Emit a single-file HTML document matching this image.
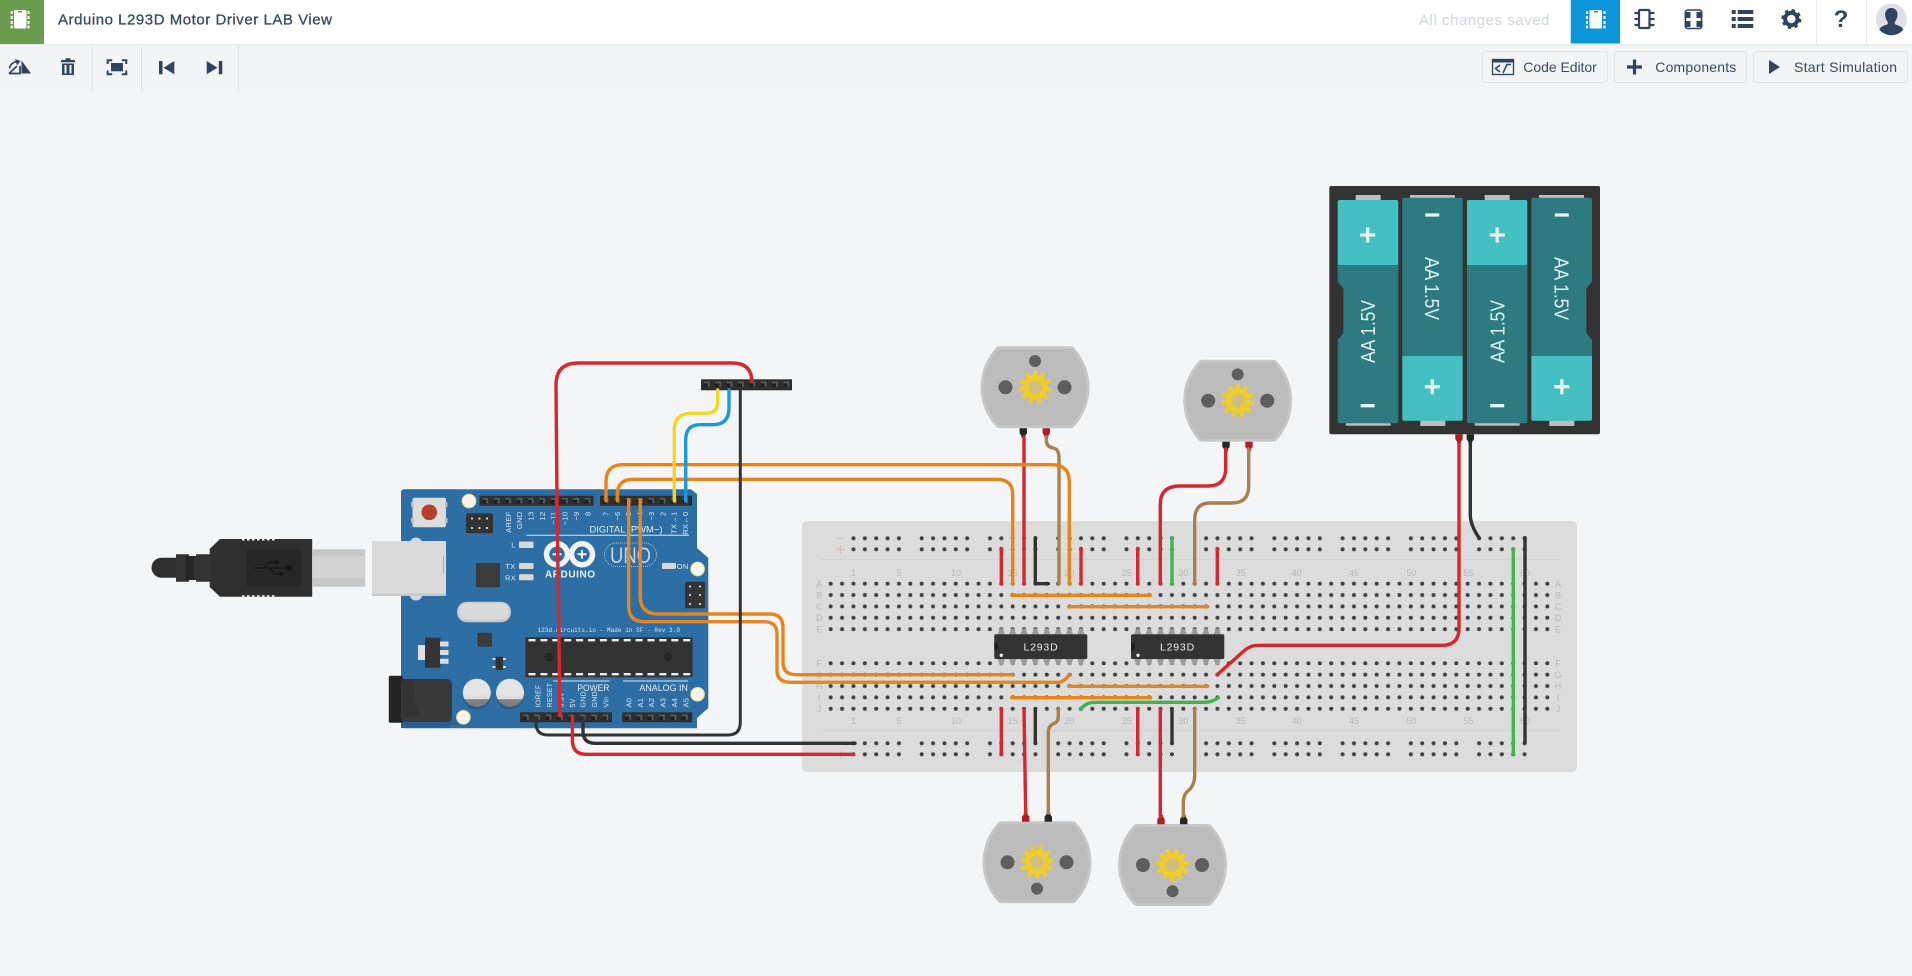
<!DOCTYPE html>
<html>
<head>
<meta charset="utf-8">
<title>Arduino L293D Motor Driver LAB View</title>
<style>
html,body{margin:0;padding:0;background:#f3f5f7;width:1912px;height:976px;overflow:hidden}
svg{display:block;position:absolute;left:0;top:0}
text{font-family:"Liberation Sans",sans-serif}
.w{fill:none;stroke-width:3.4;stroke-linecap:round;stroke-linejoin:round}
.r{stroke:#d9262c}.o{stroke:#e8841c}.b{stroke:#a8814f}.g{stroke:#3fb54a}.k{stroke:#333}.y{stroke:#f5d523}.u{stroke:#1b9ad6}
.lb{fill:#dfe8f0;font-size:7.5px;letter-spacing:.3px}
.bl{fill:#b9b9b9;font-size:9px;text-anchor:middle}
.t{fill:#3a4a5f;font-size:14px}
.ic{fill:#2f4460}
</style>
</head>
<body>
<svg width="1912" height="976" viewBox="0 0 1912 976" xmlns="http://www.w3.org/2000/svg">
<defs>
<pattern id="hole" patternUnits="userSpaceOnUse" width="11.375" height="11.37"><circle cx="5.69" cy="5.685" r="2" fill="#404040"/></pattern>
<pattern id="rail" patternUnits="userSpaceOnUse" width="68.25" height="11">
<g fill="#404040"><circle cx="5.69" cy="5.5" r="2"/><circle cx="17.06" cy="5.5" r="2"/><circle cx="28.44" cy="5.5" r="2"/><circle cx="39.81" cy="5.5" r="2"/><circle cx="51.19" cy="5.5" r="2"/></g></pattern>
<pattern id="pin" patternUnits="userSpaceOnUse" width="11.37" height="10">
<rect width="11.37" height="10" fill="#2e2e2e"/><path d="M3 2.2h5.6v5.6h-1.8v-3.8h-3.8z" fill="#5c5c5c"/><rect x="3" y="4" width="3.8" height="3.8" fill="#1f1f1f"/></pattern>
<pattern id="ictop" patternUnits="userSpaceOnUse" width="11.37" height="7"><path d="M2 7 L4.2 1.5 Q5.7 0 7.2 1.5 L9.4 7z" fill="#9b9b9b"/></pattern>
<pattern id="icbot" patternUnits="userSpaceOnUse" width="11.37" height="7"><path d="M2 0 L4.2 5.5 Q5.7 7 7.2 5.5 L9.4 0z" fill="#9b9b9b"/></pattern>
<pattern id="dash" patternUnits="userSpaceOnUse" width="11.9" height="3"><rect x="2.5" width="7" height="2.4" fill="#eeeeee"/></pattern>
<g id="motor">
<path d="M-38 -40.5Q-36 -41 -34 -41H34Q36 -41 38 -40.5A58 58 0 0 1 38 40.5Q36 41 34 41H-34Q-36 41 -38 40.5A58 58 0 0 1 -38 -40.5Z" fill="#c7c7c7"/>
<path d="M-36 -38.5H36A55 55 0 0 1 36 38.5H-36A55 55 0 0 1 -36 -38.5Z" fill="#bcbcbc"/>
<circle cx="-29.5" cy="0" r="7" fill="#5e5e5e"/><circle cx="29.5" cy="0" r="7" fill="#5e5e5e"/>
<circle cx="0" cy="-26.3" r="6" fill="#5e5e5e"/>
<circle r="12.5" fill="#efcd2a"/>
<circle r="14" fill="none" stroke="#efcd2a" stroke-width="5" stroke-dasharray="4 3.99"/>
<circle r="6.8" fill="#cfc07f"/>
</g>
<g id="tk"><path d="M-3.7 0h7.4v5l-1.8 2.5v2h-3.8v-2l-1.8-2.5z" fill="#262626"/></g>
<g id="tr"><path d="M-3.7 0h7.4v5l-1.8 2.5v2h-3.800v-2l-1.8-2.5z" fill="#b01f24"/></g>
<g id="cap"><circle cy="3" r="14" fill="#245d8e"/><circle r="14" fill="#e4e4e4"/><path d="M-12.5 6.5 A14 14 0 0 0 12.5 6.5 Z" fill="#4a4a4a"/><path d="M-14 0A14 14 0 0 0 14 0A14 3 0 0 1 -14 0Z" fill="#d0d0d0" opacity=".4"/></g>
</defs>

<!-- canvas -->
<rect width="1912" height="976" fill="#f3f5f7"/>
<!-- toolbar -->
<rect x="0" y="44" width="1912" height="47" fill="#f2f4f6"/>
<path d="M92.500 46V91M141.500 46V91M238.500 46V91" stroke="#e0e3e7" stroke-width="1"/>
<!-- top bar -->
<rect x="0" y="44" width="1912" height="1" fill="#e6e8eb"/>
<rect x="0" y="45" width="1912" height="1" fill="#eef0f2"/>
<rect width="1912" height="44" fill="#fff"/>
<rect width="44" height="44" fill="#6a9b4f"/>
<g fill="#fff"><rect x="14" y="10" width="12.500" height="18.500" rx="1.500"/><path d="M10.700 11h2v3h-2zM10.700 16h2v3h-2zM10.700 21h2v3h-2zM10.700 25.500h2v3h-2zM27.500 11h2v3h-2zM27.500 16h2v3h-2zM27.500 21h2v3h-2zM27.500 25.500h2v3h-2z"/></g>
<rect x="18" y="11" width="4" height="1.500" fill="#6a9b4f"/>
<text x="58" y="24.500" font-size="15" fill="#3a4a5f" textLength="274" lengthAdjust="spacing" stroke="#3a4a5f" stroke-width=".3">Arduino L293D Motor Driver LAB View</text>
<text x="1419" y="25" font-size="15" fill="#d2d7dc" textLength="130.500" lengthAdjust="spacing">All changes saved</text>
<rect x="1570.700" y="0" width="49.300" height="43.500" fill="#0a96d8"/>
<g fill="#fff"><rect x="1589.500" y="10" width="12.500" height="18.500" rx="1.500"/><path d="M1586 11h2v3h-2zM1586 16h2v3h-2zM1586 21h2v3h-2zM1586 25.500h2v3h-2zM1603.500 11h2v3h-2zM1603.500 16h2v3h-2zM1603.500 21h2v3h-2zM1603.500 25.500h2v3h-2z"/></g>
<rect x="1594" y="11" width="4" height="1.500" fill="#0a96d8"/>
<!-- chip icon -->
<g fill="none" stroke="#2f4460" stroke-width="2.200"><rect x="1639" y="10" width="10.500" height="18" rx="1"/><path d="M1634.500 13h4.500M1634.500 19h4.500M1634.500 25h4.500M1650 13h4.500M1650 19h4.500M1650 25h4.500"/></g>
<!-- breadboard icon -->
<g><rect x="1685.500" y="10" width="16" height="18.500" rx="2" fill="none" stroke="#2f4460" stroke-width="1.600"/><path d="M1684.500 12h6v6h-6zM1684.500 21h6v6h-6zM1696.500 12h6v6h-6zM1696.500 21h6v6h-6z" fill="#2f4460"/></g>
<!-- list -->
<g class="ic"><rect x="1731.700" y="10" width="4" height="4"/><rect x="1737.700" y="10" width="15.600" height="4"/><rect x="1731.700" y="17" width="4" height="4"/><rect x="1737.700" y="17" width="15.600" height="4"/><rect x="1731.700" y="24" width="4" height="4"/><rect x="1737.700" y="24" width="15.600" height="4"/></g>
<!-- gear -->
<g><circle cx="1791.300" cy="19" r="6.200" fill="none" stroke="#2f4460" stroke-width="4"/><circle cx="1791.300" cy="19" r="8.700" fill="none" stroke="#2f4460" stroke-width="2.600" stroke-dasharray="3.400 3.430"/></g>
<text x="1841" y="27" font-size="24" font-weight="bold" text-anchor="middle" fill="#2f4460">?</text>
<path d="M1816.500 0V44M1866.500 0V44" stroke="#e6e8eb"/>
<circle cx="1891.300" cy="19" r="15.500" fill="#dde1e6"/>
<path d="M1891.300 8c-4.200 0-6.600 3.200-6.200 7.300.3 3 1.500 5.300 2.700 6.700v2.200c-3 1.200-7.200 1.900-8.500 5.400a15.500 15.500 0 0 0 24 0c-1.300-3.500-5.500-4.200-8.500-5.400V22c1.200-1.400 2.400-3.700 2.700-6.700.4-4.100-2-7.300-6.200-7.300z" fill="#2f4460"/>

<!-- toolbar icons -->
<path d="M9 73.500H20V66" fill="none" stroke="#2f4460" stroke-width="1.800"/>
<path d="M9 73.500L17 66" fill="none" stroke="#2f4460" stroke-width="1.600"/>
<path d="M9.500 68.500c.5-3.500 3-6 7-7" fill="none" stroke="#2f4460" stroke-width="1.600"/>
<path d="M15 59l5.500 2-3.500 4.500z" fill="#2f4460"/>
<path d="M21.500 73.500V60.500L31 73.500z" fill="#2f4460"/>
<g fill="#2f4460"><path d="M65.500 58.300h5v1.700h4.500v2.200H61V60h4.500z"/><path fill-rule="evenodd" d="M62 63.500h12V75H62zM64.500 65v8.500h2V65zM69.500 65v8.500h2V65z"/></g>
<g fill="none" stroke="#2f4460" stroke-width="2"><path d="M107.700 64v-3.700h4.500M121.800 60.300h4.500V64M126.300 70.500v3.700h-4.500M112.200 74.200h-4.500v-3.700"/></g>
<rect x="111" y="63" width="12" height="8.300" fill="#2f4460"/>
<path d="M159 61h3.500v13.300H159zM174.300 61v13.300L163.500 67.700z" fill="#2f4460"/>
<path d="M222.300 61h-3.500v13.300h3.500zM206.700 61v13.300l10.800-6.600z" fill="#2f4460"/>

<!-- buttons -->
<g fill="#f2f4f6" stroke="#e2e5e9"><rect x="1482.500" y="51.500" width="125" height="31" rx="3"/><rect x="1614.500" y="51.500" width="132" height="31" rx="3"/><rect x="1753.500" y="51.500" width="154" height="31" rx="3"/></g>
<rect x="1492.500" y="59.500" width="21" height="15" fill="none" stroke="#2f4460" stroke-width="1.300"/>
<rect x="1492.500" y="59.500" width="21" height="3" fill="#2f4460"/>
<path d="M1500 65l-4.500 3.500 4.500 3.500M1503 73l4-8.500h4" fill="none" stroke="#2f4460" stroke-width="1.500"/>
<text class="t" x="1523.300" y="72" textLength="73.500" lengthAdjust="spacing">Code Editor</text>
<path d="M1627 67h15M1634.500 59.500v15" stroke="#2f4460" stroke-width="3.200"/>
<text class="t" x="1655.300" y="72" textLength="81" lengthAdjust="spacing">Components</text>
<path d="M1769 60v14l11-7z" fill="#2f4460"/>
<text class="t" x="1794" y="72" textLength="103" lengthAdjust="spacing">Start Simulation</text>

<!-- BREADBOARD -->
<rect x="802" y="521" width="775" height="251" rx="5" fill="#dcdcdc"/>
<path d="M820 559.300H1560M820 730.700H1560" stroke="#d2d2d2"/>
<rect width="728" height="56.850" transform="translate(825,578)" fill="url(#hole)"/>
<rect width="728" height="56.850" transform="translate(825,657.600)" fill="url(#hole)"/>
<rect width="341.250" height="22" transform="translate(847.760,532.800)" fill="url(#rail)"/>
<rect width="335.500" height="22" transform="translate(1200.400,532.800)" fill="url(#rail)"/>
<rect width="341.250" height="22" transform="translate(847.760,737.800)" fill="url(#rail)"/>
<rect width="335.500" height="22" transform="translate(1200.400,737.800)" fill="url(#rail)"/>
<path d="M836 538.300h9" stroke="#cfcfcf" stroke-width="1.200"/>
<path d="M836 549.300h9M840.500 545v9" stroke="#eab5b5" stroke-width="1.200"/>
<path d="M836 743.300h9" stroke="#d3d3d3" stroke-width="1"/>
<path d="M836 754.300h9M840.500 750v9" stroke="#e0c8c8" stroke-width="1"/>
<g class="bl">
<text x="853.400" y="576">1</text><text x="899" y="576">5</text><text x="956" y="576">10</text><text x="1012.700" y="576">15</text><text x="1069.400" y="576">20</text><text x="1126.700" y="576">25</text><text x="1183.400" y="576">30</text><text x="1240.700" y="576">35</text><text x="1296.700" y="576">40</text><text x="1354" y="576">45</text><text x="1411.500" y="576">50</text><text x="1468.300" y="576">55</text><text x="1525" y="576">60</text>
<text x="853.400" y="724">1</text><text x="899" y="724">5</text><text x="956" y="724">10</text><text x="1012.700" y="724">15</text><text x="1069.400" y="724">20</text><text x="1126.700" y="724">25</text><text x="1183.400" y="724">30</text><text x="1240.700" y="724">35</text><text x="1296.700" y="724">40</text><text x="1354" y="724">45</text><text x="1411.500" y="724">50</text><text x="1468.300" y="724">55</text><text x="1525" y="724">60</text>
<text x="819.300" y="587">A</text><text x="819.300" y="598.500">B</text><text x="819.300" y="610">C</text><text x="819.300" y="621">D</text><text x="819.300" y="632.500">E</text><text x="819.300" y="666.500">F</text><text x="819.300" y="678">G</text><text x="819.300" y="689">H</text><text x="819.300" y="701">I</text><text x="819.300" y="712">J</text>
<text x="1558" y="587">A</text><text x="1558" y="598.500">B</text><text x="1558" y="610">C</text><text x="1558" y="621">D</text><text x="1558" y="632.500">E</text><text x="1558" y="666.500">F</text><text x="1558" y="678">G</text><text x="1558" y="689">H</text><text x="1558" y="701">I</text><text x="1558" y="712">J</text>
</g>
<!-- L293D ICs -->
<rect width="91" height="7" transform="translate(995.600,627.400)" fill="url(#ictop)"/>
<rect width="91" height="7" transform="translate(995.600,659)" fill="url(#icbot)"/>
<rect x="994.300" y="634.300" width="93" height="24.700" rx="1.500" fill="#333"/>
<path d="M994.300 642.500a4 4 0 0 1 0 8z" fill="#1d1d1d"/>
<circle cx="1001.300" cy="655.300" r="1.700" fill="#eee"/>
<text x="1041" y="650.500" font-size="10.500" fill="#eee" text-anchor="middle" letter-spacing=".8">L293D</text>
<rect width="91" height="7" transform="translate(1132,627.400)" fill="url(#ictop)"/>
<rect width="91" height="7" transform="translate(1132,659)" fill="url(#icbot)"/>
<rect x="1131" y="634.300" width="93.300" height="24.700" rx="1.500" fill="#333"/>
<path d="M1131 642.500a4 4 0 0 1 0 8z" fill="#1d1d1d"/>
<circle cx="1138" cy="655.300" r="1.700" fill="#eee"/>
<text x="1177.500" y="650.500" font-size="10.500" fill="#eee" text-anchor="middle" letter-spacing=".8">L293D</text>

<!-- MOTORS -->
<use href="#motor" transform="translate(1035,387.300)"/>
<use href="#tk" x="1023.300" y="428.300"/><use href="#tr" x="1046.300" y="428.300"/>
<use href="#motor" transform="translate(1237.700,400.700)"/>
<use href="#tk" x="1226" y="441.700"/><use href="#tr" x="1249" y="441.700"/>
<use href="#motor" transform="translate(1037,862.300) scale(1,-1)"/>
<use href="#tr" transform="translate(1025.700,821.700) scale(1,-1)"/><use href="#tk" transform="translate(1048.300,821.700) scale(1,-1)"/>
<use href="#motor" transform="translate(1172.500,865) scale(1,-1)"/>
<use href="#tr" transform="translate(1161,824.300) scale(1,-1)"/><use href="#tk" transform="translate(1183.700,824.300) scale(1,-1)"/>

<!-- BATTERY -->
<rect x="1329.300" y="186" width="270.700" height="248.300" rx="2" fill="#333"/>
<g fill="#bdbdbd">
<rect x="1355.700" y="195" width="25" height="6"/><rect x="1345.700" y="422" width="45" height="3.700"/>
<rect x="1410" y="195" width="45" height="3.500"/><rect x="1420.300" y="420" width="25" height="6"/>
<rect x="1484.700" y="195" width="25" height="6"/><rect x="1474.700" y="422" width="45" height="3.700"/>
<rect x="1539" y="195" width="45" height="3.500"/><rect x="1549.300" y="420" width="25" height="6"/>
</g>
<g>
<path d="M1337.700 202a2 2 0 0 1 2-2h56.600a2 2 0 0 1 2 2v63h-60.600z" fill="#45c0c2"/>
<path d="M1337.700 265h60.600v156.300a2 2 0 0 1-2 2h-56.600a2 2 0 0 1-2-2V340l5.700-7V288.500l-5.700-6.800z" fill="#2d7b81"/>
<path d="M1404.300 197.700h56.400a2 2 0 0 1 2 2V356h-60.400V199.700a2 2 0 0 1 2-2z" fill="#2d7b81"/>
<path d="M1402.300 356h60.400v62.700a2 2 0 0 1-2 2h-56.400a2 2 0 0 1-2-2z" fill="#45c0c2"/>
<path d="M1467 202a2 2 0 0 1 2-2h56.300a2 2 0 0 1 2 2v63H1467z" fill="#45c0c2"/>
<path d="M1467 265h60.300v156.300a2 2 0 0 1-2 2H1469a2 2 0 0 1-2-2z" fill="#2d7b81"/>
<path d="M1533.300 197.700H1590a2 2 0 0 1 2 2V281.700l-5.700 6.800V333l5.700 7V356h-60.700V199.700a2 2 0 0 1 2-2z" fill="#2d7b81"/>
<path d="M1531.300 356H1592v62.700a2 2 0 0 1-2 2h-56.700a2 2 0 0 1-2-2z" fill="#45c0c2"/>
</g>
<g stroke="#e8f4f4" stroke-width="3.300" fill="none">
<path d="M1360.200 235h15M1367.700 227.500v15M1360.700 405.700h14"/>
<path d="M1425.300 215h14M1424.800 386.700h15M1432.300 379.200v15"/>
<path d="M1489.700 235h15M1497.200 227.500v15M1490.200 405.700h14"/>
<path d="M1554.800 215h14M1554.300 386.700h15M1561.800 379.200v15"/>
</g>
<g fill="#dff0f0" font-size="20">
<text transform="translate(1375,363) rotate(-90)" textLength="63" lengthAdjust="spacingAndGlyphs">AA 1.5V</text>
<text transform="translate(1425,257) rotate(90)" textLength="63" lengthAdjust="spacingAndGlyphs">AA 1.5V</text>
<text transform="translate(1504.500,363) rotate(-90)" textLength="63" lengthAdjust="spacingAndGlyphs">AA 1.5V</text>
<text transform="translate(1554.500,257) rotate(90)" textLength="63" lengthAdjust="spacingAndGlyphs">AA 1.5V</text>
</g>
<use href="#tr" x="1459" y="434.300"/><use href="#tk" x="1470.300" y="434.300"/>

<!-- USB PLUG -->
<path d="M176 557.700H161.500a10 10 0 0 0 0 20H176z" fill="#2f2f2f"/>
<path d="M176 554.300h13v27.400h-13zM192 556h4v24h-4zM196 554.300h14V581.700h-14z" fill="#333"/>
<rect x="186" y="556" width="8" height="24" fill="#262626"/>
<path d="M209.700 549l10.300-10h92.200v57.700H220L209.700 587z" fill="#2f2f2f"/>
<path d="M242 539h2.500v1.500H242zM247 539h2.500v1.500H247zM252 539h2.500v1.500H252zM257 539h2.500v1.500H257zM262 539h2.500v1.500H262zM267 539h2.500v1.500H267zM272 539h2.500v1.500H272zM242 595.200h2.500v1.500H242zM247 595.200h2.500v1.500H247zM252 595.200h2.500v1.500H252zM257 595.200h2.500v1.500H257zM262 595.200h2.500v1.500H262zM267 595.200h2.500v1.500H267zM272 595.200h2.500v1.500H272z" fill="#f3f5f7"/>
<rect x="246.400" y="550" width="54.300" height="36" fill="#272727"/>
<g stroke="#161616" stroke-width="1.200" fill="#161616"><path d="M254 568h34M264 568l5-6h6M270 568l5 6h6" fill="none"/><circle cx="289" cy="568" r="2.500"/><rect x="275" y="561" width="3" height="2.500"/><circle cx="281" cy="574" r="1.500"/></g>
<rect x="312.200" y="549.300" width="53" height="37.400" fill="#c7c7c7"/>
<rect x="312.200" y="556" width="53" height="22" fill="#d2d2d2"/>

<!-- ARDUINO -->
<path d="M404 489.300H691L697 494V548L708.300 558V708L697 718V728.300H404a3 3 0 0 1-3-3V492.300a3 3 0 0 1 3-3z" fill="#2d6ea5"/>
<rect x="401" y="719" width="60" height="6" fill="#2a659a"/>
<circle cx="416" cy="544" r="6.500" fill="#d9d9d9"/><circle cx="416" cy="594" r="6.500" fill="#d9d9d9"/>
<rect x="372" y="541" width="74" height="55" fill="#dadada"/>
<rect x="372" y="593.500" width="74" height="2.500" fill="#c9c9c9"/>
<rect x="443" y="556" width="1" height="18" fill="#aaa"/>
<!-- reset -->
<rect x="412.500" y="497.700" width="33.500" height="29.600" rx="2" fill="#dcdcdc"/>
<path d="M411 502h2.500v5H411zM411 518h2.500v5H411zM445 502h2.500v5H445zM445 518h2.500v5H445z" fill="#bbb"/>
<circle cx="429.300" cy="512.300" r="7.800" fill="#b5412a"/>
<!-- mount holes -->
<g fill="#f7f5e2" stroke="#cfc98f" stroke-width=".8"><circle cx="469" cy="501" r="7"/><circle cx="697.600" cy="569" r="7"/><circle cx="697.600" cy="694.300" r="7"/><circle cx="463.400" cy="717.300" r="7"/></g>
<!-- headers -->
<rect width="114" height="10" transform="translate(479.500,495.700)" fill="url(#pin)"/>
<rect width="92" height="10" transform="translate(600,495.700)" fill="url(#pin)"/>
<rect width="92" height="10" transform="translate(520,712.300)" fill="url(#pin)"/>
<rect width="70" height="10" transform="translate(622.200,712.300)" fill="url(#pin)"/>
<rect width="91" height="11" transform="translate(701,379.300)" fill="url(#pin)"/>
<!-- ICSP -->
<rect x="466" y="513.300" width="27" height="20" rx="2" fill="#333"/>
<g fill="#d8d8d8"><circle cx="472" cy="518.500" r="1.100"/><circle cx="479.500" cy="518.500" r="1.100"/><circle cx="487" cy="518.500" r="1.100"/><circle cx="472" cy="528" r="1.100"/><circle cx="479.500" cy="528" r="1.100"/><circle cx="487" cy="528" r="1.100"/></g>
<rect x="685" y="581.700" width="20" height="26.600" rx="2" fill="#333"/>
<g fill="#d8d8d8"><circle cx="690" cy="586.500" r="1.100"/><circle cx="700" cy="586.500" r="1.100"/><circle cx="690" cy="595" r="1.100"/><circle cx="700" cy="595" r="1.100"/><circle cx="690" cy="604" r="1.100"/><circle cx="700" cy="604" r="1.100"/></g>
<!-- misc parts -->
<rect x="476" y="563" width="24" height="24.300" rx="1" fill="#3b3b3b"/>
<rect x="457" y="601.700" width="54" height="20.600" rx="10" fill="#c9c9c9"/>
<rect x="459" y="603" width="50" height="16.500" rx="8" fill="#d9d9d9"/>
<rect x="477.500" y="632.700" width="14.500" height="14" rx="1" fill="#3b3b3b"/>
<rect x="418" y="645" width="7.500" height="15" fill="#dfdfdf"/>
<rect x="425" y="637.700" width="15.400" height="30" fill="#343434"/>
<path d="M440 641.500h8.500v5H440zM440 650h8.500v5H440zM440 658.700h8.500v5H440z" fill="#dcdcdc"/>
<rect x="495.500" y="656.700" width="7.500" height="13.300" fill="#333"/>
<path d="M492.500 658h3v2h-3zM492.500 666h3v2h-3zM503 658h3v2h-3zM503 666h3v2h-3z" fill="#dcdcdc"/>
<use href="#cap" x="476.800" y="692.700"/><use href="#cap" x="510" y="692.700"/>
<!-- jack -->
<rect x="401" y="720" width="50" height="8" fill="#265f92"/>
<rect x="388.800" y="675.700" width="14" height="47" rx="1.500" fill="#242424"/>
<rect x="401" y="679" width="51" height="43" rx="5" fill="#393939"/>
<path d="M402 679h12v6q0 20 6 31l-18 2z" fill="#333"/>
<!-- ATmega -->
<rect x="525.400" y="637.300" width="167.200" height="40" rx="1" fill="#333"/>
<rect width="166" height="3" transform="translate(526,639)" fill="url(#dash)"/>
<rect width="166" height="3" transform="translate(526,673)" fill="url(#dash)"/>
<circle cx="548.700" cy="657" r="4.300" fill="#252525"/><circle cx="668" cy="657" r="4.300" fill="#252525"/>
<text x="608.800" y="632" font-size="6" text-anchor="middle" fill="#dfe8f0" style="font-family:'Liberation Mono',monospace" letter-spacing=".05">123d.circuits.io - Made in SF - Rev 3.0</text>
<!-- LEDs -->
<g fill="#d8d8d8"><rect x="519" y="541.500" width="14.500" height="6.500" rx="1"/><rect x="519" y="563" width="14.500" height="6" rx="1"/><rect x="519" y="574.300" width="14.500" height="6" rx="1"/><rect x="662" y="563" width="14" height="6" rx="1"/></g>
<g class="lb" text-anchor="middle"><text x="513.500" y="547.500">L</text><text x="510.500" y="569">TX</text><text x="510.500" y="580.500">RX</text><text x="682.700" y="569">ON</text></g>
<!-- labels top -->
<g class="lb" text-anchor="end">
<text transform="translate(511,511.500) rotate(-90)">AREF</text><text transform="translate(522,511.500) rotate(-90)">GND</text>
<text transform="translate(533.500,511.500) rotate(-90)">13</text><text transform="translate(545,511.500) rotate(-90)">12</text>
<text transform="translate(556.200,511.500) rotate(-90)">~11</text><text transform="translate(567.500,511.500) rotate(-90)">~10</text>
<text transform="translate(579,511.500) rotate(-90)">~9</text><text transform="translate(590.300,511.500) rotate(-90)">8</text>
<text transform="translate(608.500,511.500) rotate(-90)">7</text><text transform="translate(620,511.500) rotate(-90)">~6</text>
<text transform="translate(631.200,511.500) rotate(-90)">~5</text><text transform="translate(642.700,511.500) rotate(-90)">4</text>
<text transform="translate(654,511.500) rotate(-90)">~3</text><text transform="translate(665.300,511.500) rotate(-90)">2</text>
<text transform="translate(676.700,511.500) rotate(-90)">TX→1</text><text transform="translate(688.200,511.500) rotate(-90)">RX←0</text>
</g>
<text x="589.500" y="532.500" font-size="9.500" fill="#e8eef4" textLength="73" lengthAdjust="spacingAndGlyphs">DIGITAL (PWM~)</text>
<path d="M526.500 535.200H689" stroke="#dfe8f0" stroke-width="1"/>
<!-- logo -->
<g fill="none" stroke="#f0f3f6" stroke-width="5.500"><circle cx="557" cy="554.300" r="10.500"/><circle cx="582" cy="554.300" r="10.500"/></g>
<path d="M552.500 554.300h9M577.500 554.300h9M582 550v8.600" stroke="#f0f3f6" stroke-width="2"/>
<text x="545" y="577.500" font-size="10" font-weight="bold" fill="#eef2f6" textLength="50" lengthAdjust="spacing">ARDUINO</text>
<rect x="604.500" y="543" width="52" height="23.500" rx="11.700" fill="none" stroke="#cfdbe6" stroke-width=".8" stroke-dasharray="1 1"/>
<text x="610" y="563" font-size="22" fill="#c9d6e4" textLength="41" lengthAdjust="spacingAndGlyphs">UNO</text>
<!-- power labels -->
<path d="M553.300 681H609.600M623 681H688" stroke="#dfe8f0" stroke-width="1"/>
<text x="577.400" y="691" font-size="9.500" fill="#e8eef4" textLength="32" lengthAdjust="spacingAndGlyphs">POWER</text>
<text x="639.400" y="691" font-size="9.500" fill="#e8eef4" textLength="48.500" lengthAdjust="spacingAndGlyphs">ANALOG IN</text>
<g class="lb" style="font-size:7px">
<text transform="translate(540.500,707.500) rotate(-90)">IOREF</text><text transform="translate(552,707.500) rotate(-90)">RESET</text>
<text transform="translate(563.500,707.500) rotate(-90)">3.3V</text><text transform="translate(575,707.500) rotate(-90)">5V</text>
<text transform="translate(585.500,707.500) rotate(-90)">GND</text><text transform="translate(597,707.500) rotate(-90)">GND</text>
<text transform="translate(608.500,707.500) rotate(-90)">Vin</text>
</g>
<g class="lb">
<text transform="translate(631.500,707.500) rotate(-90)">A0</text><text transform="translate(642.800,707.500) rotate(-90)">A1</text>
<text transform="translate(654.200,707.500) rotate(-90)">A2</text><text transform="translate(665.600,707.500) rotate(-90)">A3</text>
<text transform="translate(677,707.500) rotate(-90)">A4</text><text transform="translate(688.400,707.500) rotate(-90)">A5</text>
</g>

<!-- WIRES -->
<g>
<!-- breadboard top -->
<path class="w r" d="M1001.300 548.300V583.700M1081 548.300V583.700M1137.700 548.300V583.700M1217.300 548.300V583.700"/>
<path class="w r" d="M1024 437V583.700"/>
<path class="w k" d="M1035.300 537.700V583.700H1048.300"/>
<path class="w b" d="M1046.300 437V441Q1047 447 1053 448Q1059 449 1059 458V583.700"/>
<path class="w r" d="M1225.700 449V468Q1225.700 486 1208 486H1180Q1160.300 486 1160.300 504V583.700"/>
<path class="w g" d="M1172 537.700V583.700"/>
<path class="w b" d="M1248.700 449V486Q1248.700 503 1232 503H1210Q1194.700 503 1194.700 520V583.700"/>
<!-- orange -->
<path class="w o" d="M606 500.700V482Q606 464.700 623 464.700H1052Q1069.300 464.700 1069.300 482V583.700"/>
<path class="w o" d="M617.300 500.700V495Q617.300 479.300 633 479.300H997Q1012.700 479.300 1012.700 495V583.700"/>
<path class="w o" d="M640.200 500V596Q640.200 614 658 614H770Q783 614 783 628V662Q783 674.700 796 674.700H1012.700"/>
<path class="w o" d="M628.700 500V606Q628.700 621.700 644 621.700H764Q777 621.700 777 634V670Q777 682.300 790 682.300H1058Q1064 682.300 1069.300 674.700"/>
<path class="w o" d="M1011.700 595.300H1150.700M1068.700 606.700H1207.700M1068.700 686.300H1207.700M1011.700 697.700H1150.700"/>
<!-- header wires -->
<path class="w y" d="M717.700 390V402Q717.700 413.300 706 413.300H690Q674.300 414 674.300 430V501"/>
<path class="w u" d="M729 390V408Q729 424.700 713 424.700H700Q685.700 424.700 685.700 440V501"/>
<path class="w k" d="M740.300 390V722Q740.300 735 728 735H548Q536 735 536 723V718" style="stroke-width:3"/>
<path class="w k" d="M583 718V731Q583 743.300 595 743.300H855"/>
<path class="w r" d="M572.400 716.700V740Q572.400 754.300 586 754.300H853.300"/>
<path class="w r" d="M560 716L557 500L556 385Q556 363 578 363H732Q751.700 363 751.700 381"/>
<!-- battery -->
<path class="w r" d="M1459 444V628Q1459 645.300 1442 645.300H1258Q1251 645.300 1245 650L1217.300 674.700"/>
<path class="w k" d="M1470.300 444V515Q1470.300 525 1479.300 538.300"/>
<path class="w g" d="M1513.300 549.300V754.300"/>
<path class="w k" d="M1525 537.700V742.700"/>
<!-- bottom -->
<path class="w r" d="M1001.300 709V754.300M1137.700 709V754.300"/>
<path class="w r" d="M1024 709L1025.700 813"/>
<path class="w k" d="M1035.300 709V743.300M1172 709V743.300"/>
<path class="w b" d="M1058.300 709V717Q1058.300 722 1053 724Q1048.300 726 1048.300 733V813"/>
<path class="w g" d="M1080.700 709.300Q1086 702.300 1095 702.300H1204Q1212 702.300 1218.300 697.700"/>
<path class="w r" d="M1160.300 709V816"/>
<path class="w b" d="M1194.700 709V775Q1194.700 785 1189 790Q1183.300 794 1183.300 803V816"/>
</g>
</svg>
</body>
</html>
